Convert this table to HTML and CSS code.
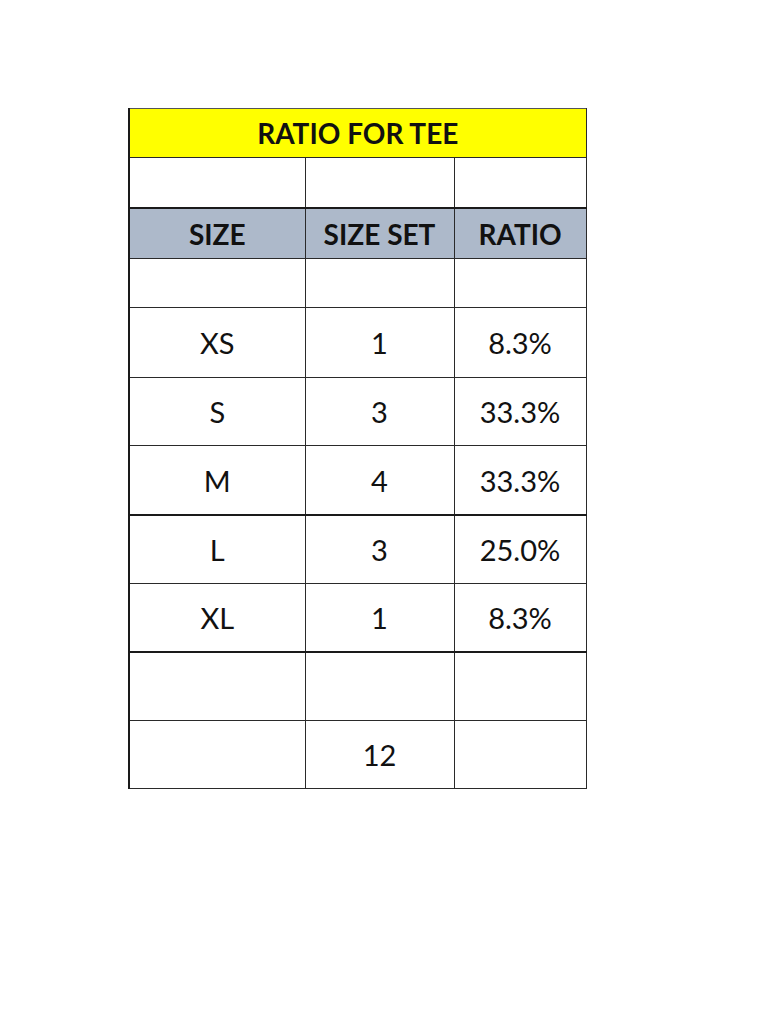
FILE: index.html
```html
<!DOCTYPE html>
<html>
<head>
<meta charset="utf-8">
<link rel="stylesheet" href="styles.css">
</head>
<body>
<table class="sheet">
  <colgroup><col class="c1"><col class="c2"><col class="c3"></colgroup>
  <tr class="title"><td colspan="3">RATIO FOR TEE</td></tr>
  <tr class="blank"><td></td><td></td><td></td></tr>
  <tr class="head"><td>SIZE</td><td>SIZE SET</td><td>RATIO</td></tr>
  <tr class="blank short"><td></td><td></td><td></td></tr>
  <tr class="row r70"><td>XS</td><td>1</td><td>8.3%</td></tr>
  <tr class="row r68"><td>S</td><td>3</td><td>33.3%</td></tr>
  <tr class="row r69"><td>M</td><td>4</td><td>33.3%</td></tr>
  <tr class="row r69 thick"><td>L</td><td>3</td><td>25.0%</td></tr>
  <tr class="row r68"><td>XL</td><td>1</td><td>8.3%</td></tr>
  <tr class="row r69 thick"><td></td><td></td><td></td></tr>
  <tr class="row r68"><td></td><td>12</td><td></td></tr>
</table>
</body>
</html>
```

FILE: styles.css
```css
html, body {
  margin: 0;
  padding: 0;
  background: #ffffff;
}
body {
  font-family: Lato, "Open Sans", "Liberation Sans", sans-serif;
  color: #111111;
}
.sheet {
  margin: 108px 0 0 128px;
  border-collapse: collapse;
  table-layout: fixed;
  width: 458px;
  border-left: 2px solid #1a1a1a;
  border-right: 1px solid #333333;
}
.c1 { width: 176px; }
.c2 { width: 149px; }
.c3 { width: 132px; }
.sheet td {
  padding: 0;
  text-align: center;
  vertical-align: middle;
  border: 1px solid #2a2a2a;
  font-size: 29px;
  line-height: 1;
}
.title td {
  background: #ffff00;
  height: 48px;
  font-weight: 700;
  font-size: 28px;
  border-top: 1px solid #555555;
}
.blank td {
  height: 49px;
}
.blank.short td {
  height: 48px;
}
.head td {
  background: #adb9ca;
  height: 49px;
  font-weight: 700;
  font-size: 28px;
  border-top: 2px solid #1a1a1a;
}
.r70 td { height: 69px; }
.r68 td { height: 67px; }
.r69 td { height: 68px; }
.r69.thick td { height: 67px; }
.thick td { border-top: 2px solid #1a1a1a; }
```
